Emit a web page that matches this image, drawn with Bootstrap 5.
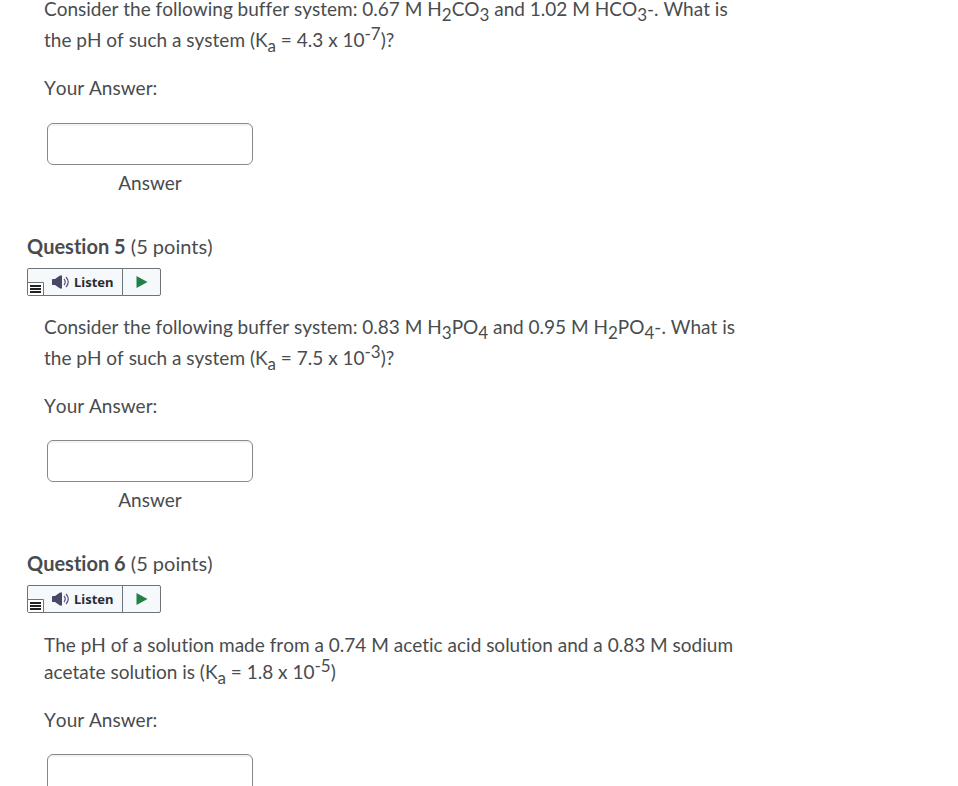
<!DOCTYPE html>
<html lang="en">
<head>
<meta charset="utf-8">
<meta name="viewport" content="width=device-width, initial-scale=1">
<title>Quiz: Buffer Systems</title>
<link href="https://cdn.jsdelivr.net/npm/bootstrap@5.3.0/dist/css/bootstrap.min.css" rel="stylesheet">
<style>
  body { font-family: Lato, "Liberation Sans", sans-serif; font-size: 19px; line-height: 27px; font-variant-ligatures: none; font-kerning: none; color: #494c4e; background: #fff; }
  .quiz { max-width: 768px; padding: 0 16px 0 27px; margin-top: -7px; }
  .question { margin-bottom: 37px; }
  .question-title { font-size: 20px; line-height: 27px; margin-bottom: 8px; }
  .question-body { padding-left: 17px; }
  .prompt { line-height: 31px; margin-bottom: 19px; }
  .prompt-compact { line-height: 27px; padding: 3px 0 2px; }
  .prompt sub, .prompt sup { font-size: 17px; line-height: 0; position: static; }
  .prompt sub { vertical-align: sub; }
  .prompt sup { vertical-align: super; }
  .answer { width: 206px; margin: 21px 0 0 3px; }
  .question:first-child .answer { margin-top: 22px; }
  .answer-input { height: 42px; border: 1px solid #86898c; border-radius: 6px; box-shadow: inset 0 2px 0 #f1f3f5; }
  .reader { height: 28px; margin-bottom: 15px; }
  .reader button { border: 1px solid #6e7376; background: #f5f9fc; color: #2b2c33; font: bold 13px/26px "Noto Sans", sans-serif; padding: 0; }
  .reader .listen { width: 96px; border-radius: 2px 0 0 2px; }
  .reader .play { width: 39px; margin-left: -1px; border-radius: 0 2px 2px 0; }
  .reader svg { display: block; }
</style>
</head>
<body class="vh-100 overflow-hidden">
<svg class="d-none" aria-hidden="true">
  <symbol id="menu" viewBox="0 0 16 13"><path d="M0 .5H15.500V13H0z" fill="#fff"/><path d="M0 .5H15.500V13" fill="none" stroke="#6e7376"/><path d="M2 3h11v2H2zM2 6h11v2H2zM2 9h11v2H2z" fill="#222"/></symbol>
  <symbol id="speaker" viewBox="0 0 18 14"><path d="M0 4.500Q0 4 1 4h2L8 .5h2v13H8L3 10H1Q0 10 0 9.500z" fill="#484768"/><path d="M12 4q2.500 3 0 6M14 2q4.500 5 0 10" fill="none" stroke="#57567a" stroke-width="1.200"/></symbol>
  <symbol id="play" viewBox="0 0 12 12"><path d="M.5 0L11.500 6L.5 12z" fill="#208048"/></symbol>
</svg>
<main class="quiz">
  <section class="question">
    <div class="question-body">
      <p class="prompt">Consider the following buffer system: 0.67 M H<sub>2</sub>CO<sub>3</sub> and 1.02 M HCO<sub>3</sub>-. What is the pH of such a system (K<sub>a</sub> = 4.3 x 10<sup>-7</sup>)?</p>
      <p class="m-0">Your Answer:</p>
      <div class="answer d-flex flex-column gap-1">
        <input class="answer-input form-control" type="text" id="answer4">
        <label class="text-center" for="answer4">Answer</label>
      </div>
    </div>
  </section>
  <section class="question">
    <h2 class="question-title fw-normal"><strong>Question 5</strong> (5 points)</h2>
    <div class="reader d-flex">
      <button class="listen d-flex align-items-center" type="button"><svg class="align-self-end" width="16" height="13"><use href="#menu"/></svg><svg class="ms-2 me-1" width="18" height="14"><use href="#speaker"/></svg>Listen</button>
      <button class="play d-flex align-items-center justify-content-center" type="button" aria-label="Play"><svg width="12" height="12"><use href="#play"/></svg></button>
    </div>
    <div class="question-body">
      <p class="prompt">Consider the following buffer system: 0.83 M H<sub>3</sub>PO<sub>4</sub> and 0.95 M H<sub>2</sub>PO<sub>4</sub>-. What is the pH of such a system (K<sub>a</sub> = 7.5 x 10<sup>-3</sup>)?</p>
      <p class="m-0">Your Answer:</p>
      <div class="answer d-flex flex-column gap-1">
        <input class="answer-input form-control" type="text" id="answer5">
        <label class="text-center" for="answer5">Answer</label>
      </div>
    </div>
  </section>
  <section class="question">
    <h2 class="question-title fw-normal"><strong>Question 6</strong> (5 points)</h2>
    <div class="reader d-flex">
      <button class="listen d-flex align-items-center" type="button"><svg class="align-self-end" width="16" height="13"><use href="#menu"/></svg><svg class="ms-2 me-1" width="18" height="14"><use href="#speaker"/></svg>Listen</button>
      <button class="play d-flex align-items-center justify-content-center" type="button" aria-label="Play"><svg width="12" height="12"><use href="#play"/></svg></button>
    </div>
    <div class="question-body">
      <p class="prompt prompt-compact">The pH of a solution made from a 0.74 M acetic acid solution and a 0.83 M sodium acetate solution is (K<sub>a</sub> = 1.8 x 10<sup>-5</sup>)</p>
      <p class="m-0">Your Answer:</p>
      <div class="answer d-flex flex-column gap-1">
        <input class="answer-input form-control" type="text" id="answer6">
        <label class="text-center" for="answer6">Answer</label>
      </div>
    </div>
  </section>
</main>
<script src="https://cdn.jsdelivr.net/npm/bootstrap@5.3.0/dist/js/bootstrap.bundle.min.js"></script>
</body>
</html>
